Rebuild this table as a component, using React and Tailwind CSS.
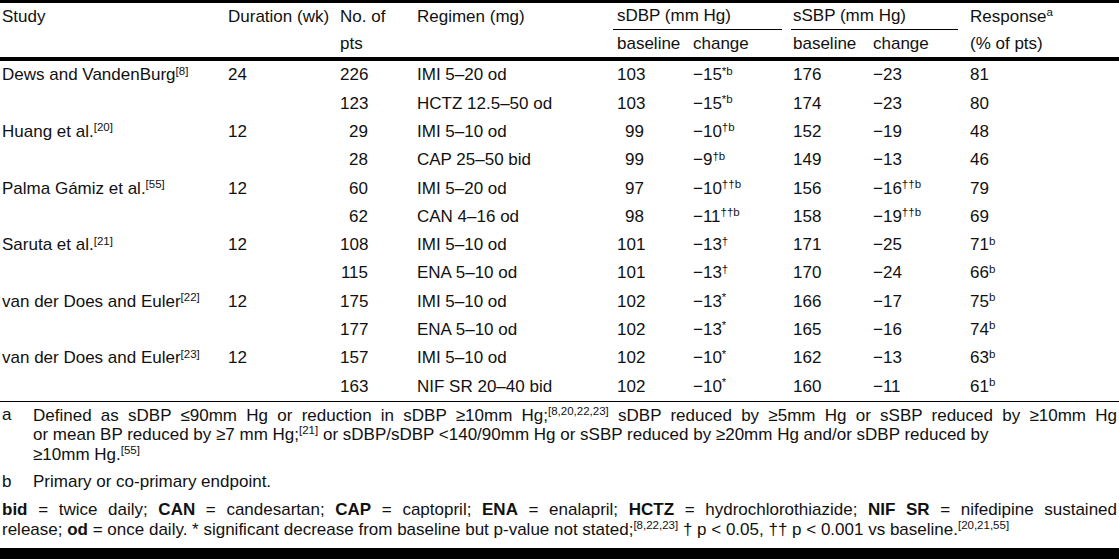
import React from "react";

const Sup = ({ children }) => (
  <sup className="text-[11.5px] relative top-[1px] leading-none align-super">{children}</sup>
);

const rows = [
  ["Dews and VandenBurg", "8", "24", "226", "IMI 5–20 od", "103", ["−15", "*b"], "176", ["−23", ""], ["81", ""]],
  ["", "", "", "123", "HCTZ 12.5–50 od", "103", ["−15", "*b"], "174", ["−23", ""], ["80", ""]],
  ["Huang et al.", "20", "12", "29", "IMI 5–10 od", "99", ["−10", "†b"], "152", ["−19", ""], ["48", ""]],
  ["", "", "", "28", "CAP 25–50 bid", "99", ["−9", "†b"], "149", ["−13", ""], ["46", ""]],
  ["Palma Gámiz et al.", "55", "12", "60", "IMI 5–20 od", "97", ["−10", "††b"], "156", ["−16", "††b"], ["79", ""]],
  ["", "", "", "62", "CAN 4–16 od", "98", ["−11", "††b"], "158", ["−19", "††b"], ["69", ""]],
  ["Saruta et al.", "21", "12", "108", "IMI 5–10 od", "101", ["−13", "†"], "171", ["−25", ""], ["71", "b"]],
  ["", "", "", "115", "ENA 5–10 od", "101", ["−13", "†"], "170", ["−24", ""], ["66", "b"]],
  ["van der Does and Euler", "22", "12", "175", "IMI 5–10 od", "102", ["−13", "*"], "166", ["−17", ""], ["75", "b"]],
  ["", "", "", "177", "ENA 5–10 od", "102", ["−13", "*"], "165", ["−16", ""], ["74", "b"]],
  ["van der Does and Euler", "23", "12", "157", "IMI 5–10 od", "102", ["−10", "*"], "162", ["−13", ""], ["63", "b"]],
  ["", "", "", "163", "NIF SR 20–40 bid", "102", ["−10", "*"], "160", ["−11", ""], ["61", "b"]],
];

const grid = "grid grid-cols-[228px_112px_77px_200px_76px_100px_80px_97px_1fr]";

export default function App() {
  return (
    <div
      className="w-[1119px] h-[559px] bg-white text-[#111] text-[17px] overflow-hidden flex flex-col"
      style={{ fontFamily: '"Liberation Sans", Arial, sans-serif' }}
    >
      <div className="h-[3px] bg-black shrink-0" />
      {/* header */}
      <div className={grid}>
        <div className="h-[27px] flex items-center pl-[2px]">Study</div>
        <div className="h-[27px] flex items-center">Duration (wk)</div>
        <div className="h-[27px] flex items-center">No. of</div>
        <div className="h-[27px] flex items-center">Regimen (mg)</div>
        <div className="col-span-2 h-[27px] flex items-center ml-[-4px] mr-[11px] border-b border-black pl-[4px]">sDBP (mm Hg)</div>
        <div className="col-span-2 h-[27px] flex items-center ml-[-2px] mr-[12px] border-b border-black pl-[2px]">sSBP (mm Hg)</div>
        <div className="h-[27px] flex items-center">
          <span>
            Response<Sup>a</Sup>
          </span>
        </div>
        <div className="h-[27px]" />
        <div className="h-[27px]" />
        <div className="h-[27px] flex items-center">pts</div>
        <div className="h-[27px]" />
        <div className="h-[27px] flex items-center">baseline</div>
        <div className="h-[27px] flex items-center">change</div>
        <div className="h-[27px] flex items-center">baseline</div>
        <div className="h-[27px] flex items-center">change</div>
        <div className="h-[27px] flex items-center">(% of pts)</div>
      </div>
      <div className="h-[4px] bg-black shrink-0" />
      {/* body */}
      <div className={grid}>
        {rows.map((r, i) => (
          <React.Fragment key={i}>
            <div className="h-[28.3px] flex items-center pl-[2px] whitespace-nowrap">
              <span>
                {r[0]}
                {r[1] && <Sup>[{r[1]}]</Sup>}
              </span>
            </div>
            <div className="h-[28.3px] flex items-center">{r[2]}</div>
            <div className="h-[28.3px] flex items-center">
              <span className="inline-block w-[28px] text-right">{r[3]}</span>
            </div>
            <div className="h-[28.3px] flex items-center whitespace-nowrap">{r[4]}</div>
            <div className="h-[28.3px] flex items-center">
              <span className="inline-block w-[27px] text-right">{r[5]}</span>
            </div>
            <div className="h-[28.3px] flex items-center whitespace-nowrap">
              <span>
                {r[6][0]}
                {r[6][1] && <Sup>{r[6][1]}</Sup>}
              </span>
            </div>
            <div className="h-[28.3px] flex items-center">{r[7]}</div>
            <div className="h-[28.3px] flex items-center whitespace-nowrap">
              <span>
                {r[8][0]}
                {r[8][1] && <Sup>{r[8][1]}</Sup>}
              </span>
            </div>
            <div className="h-[28.3px] flex items-center whitespace-nowrap">
              <span>
                {r[9][0]}
                {r[9][1] && <Sup>{r[9][1]}</Sup>}
              </span>
            </div>
          </React.Fragment>
        ))}
      </div>
      <div className="h-px bg-black shrink-0" />
      {/* footnotes */}
      <div className="pt-[3px] leading-[19px]">
        <div className="flex">
          <div className="w-[33px] pl-[2px] shrink-0">a</div>
          <div className="flex-1 pr-[2px]">
            <div className="text-justify [text-align-last:justify] whitespace-nowrap">
              Defined as sDBP ≤90mm Hg or reduction in sDBP ≥10mm Hg;<Sup>[8,20,22,23]</Sup> sDBP reduced by ≥5mm Hg or sSBP reduced by ≥10mm Hg
            </div>
            <div className="whitespace-nowrap">
              or mean BP reduced by ≥7 mm Hg;<Sup>[21]</Sup> or sDBP/sDBP &lt;140/90mm Hg or sSBP reduced by ≥20mm Hg and/or sDBP reduced by
            </div>
            <div>
              ≥10mm Hg.<Sup>[55]</Sup>
            </div>
          </div>
        </div>
        <div className="flex mt-[8px]">
          <div className="w-[33px] pl-[2px] shrink-0">b</div>
          <div className="flex-1">Primary or co-primary endpoint.</div>
        </div>
        <div className="mt-[9px] pl-[2px] pr-[2px]">
          <div className="text-justify [text-align-last:justify]">
            <b>bid</b> = twice daily; <b>CAN</b> = candesartan; <b>CAP</b> = captopril; <b>ENA</b> = enalapril; <b>HCTZ</b> = hydrochlorothiazide; <b>NIF SR</b> = nifedipine sustained
          </div>
          <div className="whitespace-nowrap">
            release; <b>od</b> = once daily. * significant decrease from baseline but p-value not stated;<Sup>[8,22,23]</Sup> † p &lt; 0.05, †† p &lt; 0.001 vs baseline.<Sup>[20,21,55]</Sup>
          </div>
        </div>
      </div>
      <div className="mt-[10px] flex-1 bg-black" />
    </div>
  );
}
